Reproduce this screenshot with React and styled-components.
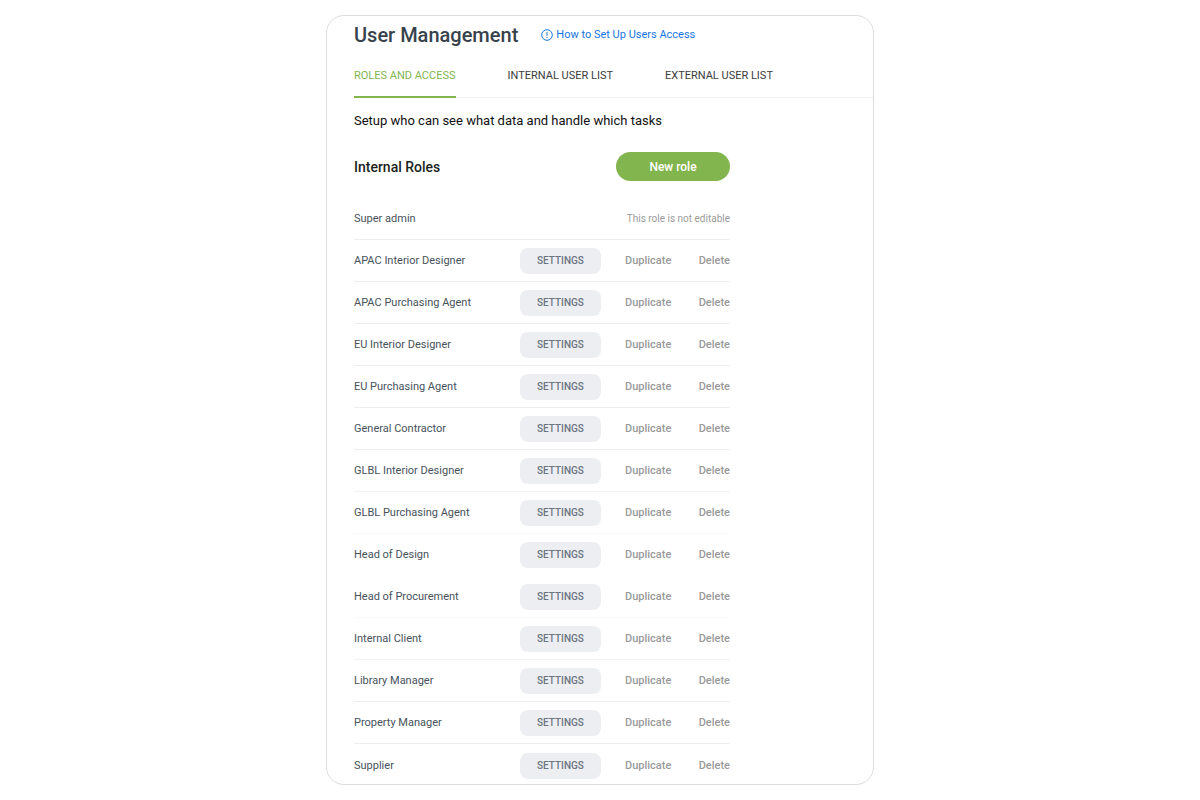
import React from "react";
import styled, { createGlobalStyle } from "styled-components";

const GlobalStyle = createGlobalStyle`
   * {
      box-sizing: border-box;
   }
   body {
      margin: 0;
      background: #ffffff;
      font-family: Roboto, "Liberation Sans", sans-serif;
   }
   button {
      font-family: inherit;
      cursor: pointer;
   }
`;

const Page = styled.main`
   min-height: 100vh;
   display: flex;
   justify-content: center;
   align-items: center;
`;

const Card = styled.section`
   width: 100%;
   max-width: 548px;
   border: 1px solid #dcdcdc;
   border-radius: 18px;
   overflow: hidden;
   padding-left: 27px;
`;

const Header = styled.header`
   display: flex;
   align-items: center;
   gap: 23px;
   height: 37px;
`;

const Title = styled.h1`
   margin: 0;
   font-size: 20px;
   line-height: 24px;
   font-weight: 500;
   color: #37424c;
`;

const HelpLink = styled.a`
   display: flex;
   align-items: center;
   gap: 3px;
   font-size: 11px;
   line-height: 16px;
   color: #1976e0;
   text-decoration: none;
`;

const Tabs = styled.nav`
   display: flex;
   gap: 52px;
   height: 45px;
   border-bottom: 1px solid #f2f2f2;
`;

const Tab = styled.a`
   height: 45px;
   padding-top: 15px;
   border-bottom: 2px solid ${(props) => (props.$active ? "#82b54e" : "transparent")};
   font-size: 11px;
   line-height: 16px;
   color: ${(props) => (props.$active ? "#82b54e" : "#3c3c3c")};
   text-decoration: none;
   white-space: nowrap;
`;

const Content = styled.div`
   max-width: 376px;
`;

const Intro = styled.p`
   margin: 14px 0 0;
   font-size: 13px;
   line-height: 18px;
   color: #111111;
`;

const SectionHead = styled.div`
   display: flex;
   justify-content: space-between;
   align-items: center;
   margin: 22px 0 17px;
`;

const SectionTitle = styled.h2`
   margin: 0;
   font-size: 14px;
   line-height: 18px;
   font-weight: 500;
   color: #1c1f22;
`;

const NewRoleButton = styled.button`
   width: 114px;
   height: 29px;
   padding: 0;
   border: 0;
   border-radius: 15px;
   background: #82b54e;
   color: #ffffff;
   font-size: 12px;
   font-weight: 500;
`;

const Table = styled.table`
   width: 100%;
   table-layout: fixed;
   border-collapse: separate;
   border-spacing: 0;
`;

const Cell = styled.td`
   height: 42px;
   padding: 0;
   border-bottom: 1px solid ${(props) => props.$line};
   text-align: ${(props) => props.$align || "left"};
   vertical-align: middle;
   white-space: nowrap;

   tr:last-child > & {
      height: 40px;
      padding-top: 3px;
      border-bottom: 0;
   }
`;

const RoleName = styled(Cell)`
   font-size: 11px;
   line-height: 16px;
   font-weight: 400;
   color: #47525b;
`;

const Note = styled(Cell)`
   font-size: 10px;
   line-height: 16px;
   color: #9b9b9b;
`;

const SettingsButton = styled.button`
   display: block;
   width: 81px;
   height: 26px;
   padding: 0;
   border: 0;
   border-radius: 8px;
   background: #edeef2;
   color: #6c7582;
   font-size: 10px;
   font-weight: 500;
`;

const TextButton = styled.button`
   display: block;
   margin-left: ${(props) => (props.$end ? "auto" : "0")};
   padding: 0;
   border: 0;
   background: none;
   color: #9a9a9a;
   font-size: 11px;
   line-height: 16px;
   font-weight: 500;
`;

const LINE = "#ededed";
const SOFT = "#f3f3f3";
const FAINT = "#f9f9f9";

const roles = [
   { name: "APAC Interior Designer", line: LINE },
   { name: "APAC Purchasing Agent", line: LINE },
   { name: "EU Interior Designer", line: LINE },
   { name: "EU Purchasing Agent", line: LINE },
   { name: "General Contractor", line: LINE },
   { name: "GLBL Interior Designer", line: SOFT },
   { name: "GLBL Purchasing Agent", line: FAINT },
   { name: "Head of Design", line: "transparent" },
   { name: "Head of Procurement", line: FAINT },
   { name: "Internal Client", line: SOFT },
   { name: "Library Manager", line: LINE },
   { name: "Property Manager", line: LINE },
   { name: "Supplier", line: LINE },
];

const tabs = ["ROLES AND ACCESS", "INTERNAL USER LIST", "EXTERNAL USER LIST"];

const InfoIcon = () => (
   <svg width="12" height="12" viewBox="0 0 12 12" fill="none" stroke="#1976e0" aria-hidden="true">
      <circle cx="6" cy="6" r="5.3" />
      <path d="M6 3v3.7M6 7.8v1.2" />
   </svg>
);

const RoleRow = ({ name, line }) => (
   <tr>
      <RoleName as="th" scope="row" $line={line}>
         {name}
      </RoleName>
      <Cell $line={line}>
         <SettingsButton type="button">SETTINGS</SettingsButton>
      </Cell>
      <Cell $line={line}>
         <TextButton type="button">Duplicate</TextButton>
      </Cell>
      <Cell $line={line}>
         <TextButton type="button" $end>
            Delete
         </TextButton>
      </Cell>
   </tr>
);

export default () => (
   <>
      <GlobalStyle />
      <Page>
         <Card>
            <Header>
               <Title>User Management</Title>
               <HelpLink href="#help">
                  <InfoIcon />
                  How to Set Up Users Access
               </HelpLink>
            </Header>
            <Tabs>
               {tabs.map((tab, i) => (
                  <Tab key={tab} href={`#tab-${i}`} $active={i === 0}>
                     {tab}
                  </Tab>
               ))}
            </Tabs>
            <Content>
               <Intro>Setup who can see what data and handle which tasks</Intro>
               <SectionHead>
                  <SectionTitle>Internal Roles</SectionTitle>
                  <NewRoleButton type="button">New role</NewRoleButton>
               </SectionHead>
               <Table>
                  <colgroup>
                     <col />
                     <col width="105" />
                     <col width="57" />
                     <col width="48" />
                  </colgroup>
                  <tbody>
                     <tr>
                        <RoleName as="th" scope="row" $line={LINE}>
                           Super admin
                        </RoleName>
                        <Note colSpan={3} $line={LINE} $align="right">
                           This role is not editable
                        </Note>
                     </tr>
                     {roles.map((role) => (
                        <RoleRow key={role.name} {...role} />
                     ))}
                  </tbody>
               </Table>
            </Content>
         </Card>
      </Page>
   </>
);
